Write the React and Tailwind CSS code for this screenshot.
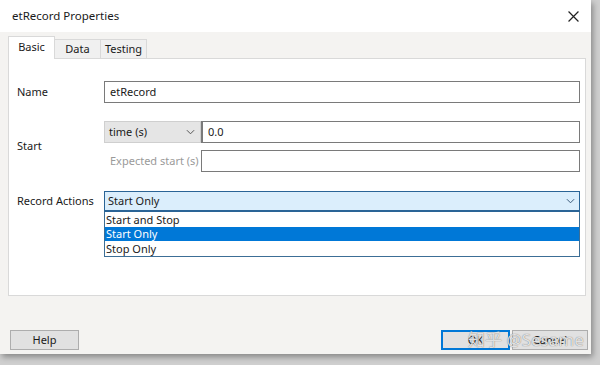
import React from 'react';

const font = { fontFamily: '"Noto Sans", "Open Sans", "Noto Sans CJK SC", sans-serif' };

function Chevron({ className }) {
  return (
    <svg viewBox="0 0 10 6" className={className} fill="none" stroke="currentColor" strokeWidth="1.1">
      <path d="M1 1l4 4 4-4" />
    </svg>
  );
}

function TextBox({ value, className = '' }) {
  return (
    <div className={`flex-1 h-[22px] border border-[#7a7a7a] bg-white flex items-center px-[5px] text-[11px] text-[#1a1a1a] ${className}`}>
      {value}
    </div>
  );
}

export default function App() {
  return (
    <div className="w-[600px] h-[365px] bg-[#cfcfcf] overflow-hidden" style={font}>
      <div className="relative w-[591px] h-[354px] bg-[#f4f3f1] flex flex-col shadow-[2px_3px_6px_rgba(0,0,0,0.35)]">
        {/* title bar */}
        <div className="h-[32px] bg-white flex items-center justify-between pl-[12px] pr-[12px]">
          <span className="text-[11.5px] text-[#1a1a1a]">etRecord Properties</span>
          <svg viewBox="0 0 10 10" className="w-[11px] h-[11px]" stroke="#222" strokeWidth="1.1">
            <path d="M0.5 0.5l9 9M9.5 0.5l-9 9" />
          </svg>
        </div>

        {/* tabs */}
        <div className="flex items-end pl-[8px] h-[26px] text-[11px] text-[#1a1a1a]">
          <div className="relative z-10 w-[47px] h-[23px] -mb-px bg-white border border-b-0 border-[#d9d9d9] flex items-center justify-center pb-[2px]">Basic</div>
          <div className="w-[46px] h-[19px] bg-[#f0f0f0] border border-l-0 border-b-0 border-[#d9d9d9] flex items-center justify-center">Data</div>
          <div className="w-[46px] h-[19px] bg-[#f0f0f0] border border-l-0 border-b-0 border-[#d9d9d9] flex items-center justify-center">Testing</div>
        </div>

        {/* tab panel */}
        <div className="ml-[8px] w-[578px] h-[238px] bg-white border border-[#d9d9d9] pt-[22px] pl-[8px] pr-[5px] text-[11px] text-[#1a1a1a]">
          <div className="flex items-center">
            <div className="w-[87px]">Name</div>
            <TextBox value="etRecord" />
          </div>

          <div className="flex items-center mt-[18px]">
            <div className="w-[87px]">Start</div>
            <div className="flex-1 flex flex-col">
              <div className="flex">
                <div className="w-[97px] h-[22px] bg-[#e5e5e5] border border-[#cfcfcf] flex items-center justify-between pl-[4px] pr-[5px]">
                  <span>time (s)</span>
                  <Chevron className="w-[9px] h-[6px] text-[#555]" />
                </div>
                <TextBox value="0.0" className="border-l-2" />
              </div>
              <div className="flex mt-[7px]">
                <div className="w-[97px] h-[22px] flex items-center pl-[6px] whitespace-nowrap text-[#9a9a9a]">Expected start (s)</div>
                <TextBox value="" />
              </div>
            </div>
          </div>

          <div className="flex items-start mt-[19px]">
            <div className="w-[87px] h-[21px] flex items-center whitespace-nowrap">Record Actions</div>
            <div className="flex-1 flex flex-col">
              <div className="h-[21px] bg-[#dbeefc] border border-[#2a6496] border-b-2 flex items-center justify-between pl-[3px] pr-[4px]">
                <span>Start Only</span>
                <Chevron className="w-[9px] h-[6px] text-[#3b5a7a]" />
              </div>
              <div className="border border-t-0 border-[#3c6e96] bg-white flex flex-col leading-[14px]">
                <div className="h-[15px] flex items-center pl-[1px]">Start and Stop</div>
                <div className="h-[14px] flex items-center pl-[1px] bg-[#0078d7] text-white">Start Only</div>
                <div className="h-[15px] flex items-center pl-[1px]">Stop Only</div>
              </div>
            </div>
          </div>
        </div>

        {/* footer */}
        <div className="flex-1 flex items-end justify-between pl-[10px] pr-[3px] pb-[4px] text-[11px] text-[#1a1a1a]">
          <div className="w-[69px] h-[20px] bg-[#e1e1e1] border border-[#adadad] flex items-center justify-center">Help</div>
          <div className="flex gap-[2px]">
            <div className="w-[69px] h-[20px] bg-[#e1e1e1] border-2 border-[#0078d7] flex items-center justify-center">OK</div>
            <div className="w-[76px] h-[20px] bg-[#e1e1e1] border border-[#adadad] flex items-center justify-center">Cancel</div>
          </div>
        </div>

        {/* watermark */}
        <div className="absolute left-[468px] top-[331px] whitespace-nowrap text-[17px] leading-none text-white/80 [text-shadow:0_0_1px_#555]">
          知乎 @Sesame
        </div>
      </div>
    </div>
  );
}
